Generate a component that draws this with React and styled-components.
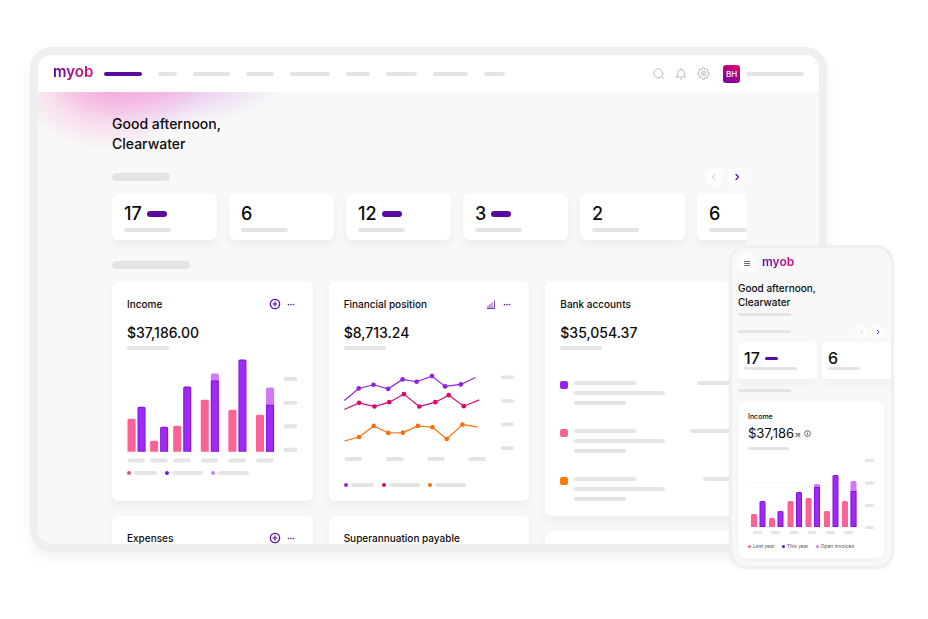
import React from "react";
import styled, { createGlobalStyle } from "styled-components";

const GlobalStyle = createGlobalStyle`
  *, *::before, *::after { box-sizing: border-box; }
  body { margin: 0; background: #fff; }
  h1, h2, h3, p, ul { margin: 0; padding: 0; font-weight: 500; }
  button { border: 0; padding: 0; background: none; font: inherit; }
`;

const Page = styled.div`
  display: flex;
  min-height: 100vh;
  padding: 47px 34px 67px 30px;
  font-family: Inter, "Liberation Sans", sans-serif;
  font-weight: 500;
  color: #0c0c0e;
`;

const Stage = styled.div`
  position: relative;
  flex: 1;
  min-width: 0;
`;

const Desktop = styled.div`
  height: calc(100vh - 114px);
  margin-right: 67px;
  overflow: hidden;
  border: 8px solid #efefef;
  border-radius: 22px;
  background: #f8f8f8;
  box-shadow: 0 6px 14px rgba(0, 0, 0, 0.05);
`;

const TopBar = styled.header`
  display: flex;
  align-items: center;
  height: 37px;
  padding: 0 15px;
  background: #fff;
`;

const Logo = styled.a`
  width: ${(p) => (p.$small ? 35 : 42)}px;
  padding-bottom: ${(p) => (p.$small ? 2 : 4)}px;
  font-family: Inter, sans-serif;
  font-size: ${(p) => (p.$small ? 12 : 15)}px;
  line-height: ${(p) => (p.$small ? 16 : 20)}px;
  font-weight: 600;
  white-space: nowrap;
  text-decoration: none;
  color: transparent;
  background: linear-gradient(100deg, #5b0a9d 5%, #a8108f 50%, #ee0a68 100%);
  background-clip: text;
  -webkit-background-clip: text;
`;

const Nav = styled.nav`
  display: flex;
  align-items: center;
  gap: 16px;
  margin-left: 9px;
`;

const NavLink = styled.a`
  display: block;
  width: ${(p) => p.$w}px;
  height: 4px;
  border-radius: 2px;
  background: ${(p) => (p.$active ? "#5a0aa0" : "#e4e4e4")};
`;

const Tools = styled.div`
  display: flex;
  align-items: center;
  gap: 10px;
  margin-left: auto;
`;

const IconButton = styled.button`
  display: flex;
  flex: none;
  align-items: center;
  justify-content: center;
  color: ${(p) => p.$color || "#5a0aa0"};
`;

const Avatar = styled.span`
  display: grid;
  place-items: center;
  width: 17px;
  height: 18px;
  margin: 0 -4px 0 3px;
  border-radius: 3px;
  background: linear-gradient(205deg, #e2066e 5%, #a0058c 50%, #7a0398 95%);
  color: #fff;
  font-size: 8px;
  line-height: 10px;
`;

const Pill = styled.span`
  display: block;
  flex: none;
  width: ${(p) => p.$w}px;
  height: ${(p) => p.$h || 4}px;
  margin-top: ${(p) => p.$mt || 0}px;
  border-radius: 4px;
  background: ${(p) => p.$color || "#e4e4e4"};
`;

const Content = styled.main`
  padding: 22px 73px 0 74px;
  background:
    radial-gradient(ellipse 92px 66px at 70px -8px, rgba(249, 160, 212, 0.85), rgba(249, 160, 212, 0.35) 55%, transparent),
    radial-gradient(ellipse 120px 42px at 124px -8px, rgba(232, 160, 218, 0.8), rgba(220, 180, 240, 0.35) 60%, transparent);
`;

const Greeting = styled.h1`
  font-size: ${(p) => (p.$small ? 10 : 14)}px;
  line-height: ${(p) => (p.$small ? 14 : 20)}px;
  margin-top: ${(p) => (p.$small ? 9 : 0)}px;
  font-weight: 500;
`;

const SectionHead = styled.div`
  display: flex;
  align-items: center;
  justify-content: space-between;
  margin-top: ${(p) => (p.$small ? 9 : 14)}px;
  padding-right: ${(p) => (p.$small ? 7 : 0)}px;
`;

const Arrows = styled.div`
  display: flex;
  gap: ${(p) => (p.$small ? 3 : 5)}px;
`;

const RoundButton = styled.button`
  display: grid;
  place-items: center;
  width: ${(p) => p.$size}px;
  height: ${(p) => p.$size}px;
  border-radius: 50%;
  background: #fdfdfd;
  color: ${(p) => (p.$muted ? "#d8d8d8" : "#5a0aa0")};
`;

const StatStrip = styled.div`
  display: flex;
  gap: ${(p) => (p.$small ? 5 : 12)}px;
  margin-top: ${(p) => (p.$small ? 5 : 0)}px;
  padding: ${(p) => (p.$small ? "0 0 10px" : "8px 0 21px")};
  overflow: hidden;
`;

const Stat = styled.div`
  flex: none;
  width: ${(p) => (p.$small ? 79 : 105)}px;
  padding: ${(p) => (p.$small ? "6px 6px 9px" : "9px 12px 8px")};
  border-radius: ${(p) => (p.$small ? 3 : 6)}px;
  background: #fff;
  box-shadow: 0 5px 8px rgba(0, 0, 0, ${(p) => (p.$small ? 0.03 : 0.05)});
`;

const StatValue = styled.div`
  display: flex;
  align-items: center;
  gap: 5px;
  font-size: ${(p) => (p.$small ? 16 : 18)}px;
  line-height: ${(p) => (p.$small ? 18 : 22)}px;
`;

const Columns = styled.div`
  display: grid;
  grid-template-columns: repeat(3, minmax(0, 1fr));
  gap: 16px;
  margin-top: 13px;
`;

const Column = styled.div`
  display: flex;
  flex-direction: column;
  gap: 15px;
`;

const Card = styled.section`
  min-height: 219px;
  padding: 14px 15px;
  border-radius: 6px;
  background: #fff;
  box-shadow: 0 5px 10px rgba(0, 0, 0, 0.05);
`;

const CardHead = styled.div`
  display: flex;
  align-items: center;
  justify-content: space-between;
  height: 16px;
`;

const CardTitle = styled.h2`
  font-size: 10px;
  line-height: 16px;
  white-space: nowrap;
`;

const CardActions = styled.div`
  display: flex;
  gap: 6px;
  padding-right: 3px;
`;

const Amount = styled.p`
  margin-top: 11px;
  font-size: 14px;
  line-height: 20px;
`;

const Chart = styled.svg`
  display: block;
  width: 100%;
  height: auto;
  margin-top: 5px;
`;

const Legend = styled.ul`
  display: flex;
  gap: ${(p) => p.$gap || 8}px;
  margin-top: ${(p) => p.$mt}px;
  list-style: none;
`;

const LegendItem = styled.li`
  display: flex;
  align-items: center;
  gap: ${(p) => (p.$small ? 2 : 3)}px;
  font-size: 5px;
  line-height: 8px;
  font-weight: 400;
  white-space: nowrap;
  color: #55555c;
`;

const Dot = styled.span`
  width: ${(p) => p.$size || 4}px;
  height: ${(p) => p.$size || 4}px;
  border-radius: 50%;
  background: ${(p) => p.$color};
`;

const Accounts = styled.ul`
  display: grid;
  gap: 24px;
  margin: 31px 0 1px;
  list-style: none;
`;

const Account = styled.li`
  display: flex;
  gap: 6px;
`;

const Swatch = styled.span`
  width: 8px;
  height: 8px;
  border-radius: 2px;
  background: ${(p) => p.$color};
`;

const AccountLines = styled.div`
  display: grid;
  flex: 1;
  gap: 6px;
`;

const Phone = styled.aside`
  position: absolute;
  right: 0;
  bottom: -17px;
  width: 165px;
  padding: 6px 0 8px 6px;
  overflow: hidden;
  border: 3px solid #efefef;
  border-radius: 18px;
  background: #f8f8f8;
  box-shadow: 0 2px 4px rgba(0, 0, 0, 0.03);
`;

const PhoneBar = styled.div`
  display: flex;
  align-items: center;
  gap: 6px;
`;

const PhoneCard = styled.section`
  margin: 10px 7px 0 0;
  padding: 10px 10px 8px;
  border-radius: 6px;
  background: #fff;
  box-shadow: 0 2px 4px rgba(0, 0, 0, 0.03);
`;

const PhoneTitle = styled.h2`
  font-size: 7px;
  line-height: 10px;
`;

const PhoneAmount = styled.p`
  display: flex;
  align-items: center;
  margin-top: 2px;
  font-size: 13px;
  line-height: 18px;
  font-weight: 400;
`;

const Cents = styled.span`
  margin: 0 4px 0 0;
  padding-top: 4px;
  font-size: 5px;
  line-height: 6px;
`;

const PINK = "#fb6394";
const PURPLE = "#9f2bf3";
const LILAC = "#d07af8";
const GREY = "#e4e4e4";

const SearchIcon = () => (
  <svg width="12" height="12" viewBox="0 0 24 24" fill="none" stroke="currentColor" strokeWidth="1.8" strokeLinecap="round">
    <circle cx="10.500" cy="10.500" r="9" />
    <path d="m17.500 17.500 4.500 4.500" />
  </svg>
);

const BellIcon = () => (
  <svg width="12" height="12" viewBox="0 0 24 24" fill="none" stroke="currentColor" strokeWidth="1.8" strokeLinecap="round" strokeLinejoin="round">
    <path d="M12 1v2M5.500 16V9.500a6.500 6.500 0 0 1 13 0V16l3 2H2.500zM11 21.500h2" />
  </svg>
);

const GearIcon = () => (
  <svg width="13" height="13" viewBox="0 0 24 24" fill="none" stroke="currentColor" strokeWidth="1.7" strokeLinejoin="round">
    <path d="M9.700 4.200 10.500 1.500h3l.8 2.700 1.600.7 2.500-1.400 2.100 2.100-1.400 2.500.7 1.600 2.700.8v3l-2.700.8-.7 1.600 1.400 2.500-2.100 2.100-2.500-1.400-1.600.7-.8 2.700h-3l-.8-2.700-1.600-.7-2.500 1.400-2.100-2.100 1.400-2.500-.7-1.600-2.700-.8v-3l2.700-.8.7-1.600-1.400-2.500 2.100-2.100 2.500 1.400z" />
    <circle cx="12" cy="12" r="4" />
    <circle cx="12" cy="12" r="1" />
  </svg>
);

const Chevron = ({ left, size = 8 }) => (
  <svg width={size} height={size} viewBox="0 0 8 8" fill="none" stroke="currentColor" strokeWidth="1.2" strokeLinecap="round" strokeLinejoin="round">
    <path d={left ? "M5 1.500 2.500 4 5 6.500" : "M3 1.500 5.500 4 3 6.500"} />
  </svg>
);

const PlusIcon = () => (
  <svg width="12" height="12" viewBox="0 0 12 12" fill="none" stroke="currentColor" strokeWidth="1.2">
    <circle cx="6" cy="6" r="4.700" />
    <path d="M6 3.500v5M3.500 6h5" />
  </svg>
);

const BarsIcon = () => (
  <svg width="12" height="12" viewBox="0 0 12 12" fill="none" stroke="currentColor" strokeWidth="1">
    <path d="M2 10.500h8M3 7.500v3M5 6v4.500M7 4.500v6M9.500 2.500v8" opacity="0.75" />
  </svg>
);

const DotsIcon = () => (
  <svg width="8" height="12" viewBox="0 0 8 12" fill="currentColor">
    <circle cx="1.500" cy="6.500" r="0.800" />
    <circle cx="4" cy="6.500" r="0.800" />
    <circle cx="6.500" cy="6.500" r="0.800" />
  </svg>
);

const MenuIcon = () => (
  <svg width="8" height="8" viewBox="0 0 8 8" stroke="#6c6c72" strokeWidth="1">
    <path d="M1 2.500h6M1 4.500h6M1 6.500h6" />
  </svg>
);

const InfoIcon = () => (
  <svg width="7" height="7" viewBox="0 0 7 7" fill="none" stroke="#333338" strokeWidth="0.700">
    <circle cx="3.500" cy="3.500" r="2.900" />
    <path d="M3.500 3.100v2M3.500 1.700v.7" />
  </svg>
);

const incomeBars = [
  { x: 0.5, last: 33, now: 45 },
  { x: 23, last: 11, now: 25 },
  { x: 46, last: 26, now: 65 },
  { x: 73.5, last: 52, now: 71, open: 7 },
  { x: 101, last: 42, now: 92 },
  { x: 128.5, last: 37, now: 47, open: 17 },
];

const phoneBars = [
  { x: 3, last: 13, now: 26 },
  { x: 21, last: 9, now: 16 },
  { x: 39.5, last: 26, now: 35 },
  { x: 57.5, last: 29, now: 40, open: 3 },
  { x: 76, last: 16, now: 52 },
  { x: 94, last: 26, now: 36, open: 10 },
];

const topRounded = (x, y, w, h, r) =>
  `M${x} ${y + h}V${y + r}q0 ${-r} ${r} ${-r}h${w - 2 * r}q${r} 0 ${r} ${r}V${y + h}z`;

function Bars({ data, base, width, step }) {
  return data.map((b) => {
    const open = b.open || 0;
    const nx = b.x + step;
    return (
      <g key={b.x}>
        <path d={topRounded(b.x, base - b.last, width, b.last, 1.5)} fill={PINK} />
        {open > 0 && <path d={topRounded(nx, base - b.now - open, width, open + b.now, 1.5)} fill={LILAC} />}
        <path d={topRounded(nx, base - b.now, width, b.now, open ? 0.5 : 1.5)} fill="#8413da" />
        <rect x={nx + 1} y={base - b.now + 1} width={width - 2} height={b.now - 2} fill={PURPLE} />
      </g>
    );
  });
}

function IncomeChart() {
  return (
    <Chart viewBox="0 0 170 110" role="img" aria-label="Income by month">
      <Bars data={incomeBars} base={96.5} width={8} step={10} />
      {incomeBars.map((b) => (
        <rect key={b.x} x={b.x} y="103" width="17.500" height="4" rx="2" fill={GREY} />
      ))}
      {[22, 45.5, 69, 92.5].map((y) => (
        <rect key={y} x="156" y={y} width="13.500" height="4" rx="1.500" fill={GREY} />
      ))}
    </Chart>
  );
}

const series = [
  { color: "#9120e4", points: [[67, 376], [110, 340], [154, 329], [198, 341], [241, 313], [283, 320], [329, 303], [368, 334], [415, 328], [459, 307]] },
  { color: "#dc0a6e", points: [[67, 403], [111, 383], [157, 394], [201, 381], [245, 357], [291, 394], [339, 381], [379, 360], [424, 393], [470, 374]] },
  { color: "#f56f10", points: [[67, 497], [111, 485], [155, 452], [198, 473], [242, 472], [287, 452], [330, 456], [373, 491], [420, 448], [465, 455]] },
];

function PositionChart() {
  return (
    <Chart viewBox="66 240 510 330" role="img" aria-label="Financial position over time">
      {series.map((s) => (
        <g key={s.color}>
          <polyline points={s.points.join(" ")} fill="none" stroke={s.color} strokeWidth="3.500" />
          {s.points.slice(1, -1).map(([x, y]) => (
            <circle key={x} cx={x} cy={y} r="7" fill={s.color} />
          ))}
        </g>
      ))}
      {[68, 192, 315, 438].map((x) => (
        <rect key={x} x={x} y="545" width="52" height="12" rx="5" fill={GREY} />
      ))}
      {[307, 378, 448, 519].map((y) => (
        <rect key={y} x="534" y={y - 6} width="40" height="11" rx="5" fill={GREY} />
      ))}
    </Chart>
  );
}

function PhoneChart() {
  return (
    <Chart viewBox="0 0 126 82" role="img" aria-label="Income by month">
      <path d="M2 27.500h106" stroke="#f6f6f6" />
      <Bars data={phoneBars} base={72} width={6} step={8.5} />
      {phoneBars.map((b) => (
        <rect key={b.x} x={b.x + 2} y="76" width="9" height="3" rx="1.500" fill={GREY} />
      ))}
      {[4, 26.5, 49, 71].map((y) => (
        <rect key={y} x="117" y={y} width="9" height="3" rx="1.500" fill={GREY} />
      ))}
    </Chart>
  );
}

function WidgetCard({ title, amount, icon, children }) {
  return (
    <Card>
      <CardHead>
        <CardTitle>{title}</CardTitle>
        {icon && (
          <CardActions>
            <IconButton aria-label={`${title} action`}>{icon}</IconButton>
            <IconButton aria-label={`${title} menu`}><DotsIcon /></IconButton>
          </CardActions>
        )}
      </CardHead>
      {amount && (
        <>
          <Amount>{amount}</Amount>
          <Pill $w={42} $mt={3} />
        </>
      )}
      {children}
    </Card>
  );
}

function PillLegend({ colors, mt }) {
  return (
    <Legend $mt={mt}>
      {colors.map((c, i) => (
        <LegendItem key={c}>
          <Dot $color={c} />
          <Pill $w={i ? 31 : 23} />
        </LegendItem>
      ))}
    </Legend>
  );
}

const stats = [["17", true], ["6"], ["12", true], ["3", true], ["2"], ["6"]];
const navItems = [38, 19, 37, 28, 40, 24, 31, 35, 21];
const accounts = [["#9a20ee", 34], [PINK, 41], ["#ff7a0a", 28]];

export default function App() {
  return (
    <>
      <GlobalStyle />
      <Page>
        <Stage>
          <Desktop>
            <TopBar>
              <Logo href="#home">myob</Logo>
              <Nav aria-label="Main">
                {navItems.map((w, i) => (
                  <NavLink key={i} href={`#section-${i}`} aria-label={`Section ${i + 1}`} $w={w} $active={i === 0} />
                ))}
              </Nav>
              <Tools>
                <IconButton $color="#b4b4b8" aria-label="Search"><SearchIcon /></IconButton>
                <IconButton $color="#b4b4b8" aria-label="Notifications"><BellIcon /></IconButton>
                <IconButton $color="#b4b4b8" aria-label="Settings"><GearIcon /></IconButton>
                <Avatar>BH</Avatar>
                <Pill $w={58} />
              </Tools>
            </TopBar>
            <Content>
              <Greeting>Good afternoon,<br />Clearwater</Greeting>
              <SectionHead>
                <Pill $w={58} $h={8} />
                <Arrows>
                  <RoundButton $size={18} $muted aria-label="Previous"><Chevron left /></RoundButton>
                  <RoundButton $size={18} aria-label="Next"><Chevron /></RoundButton>
                </Arrows>
              </SectionHead>
              <StatStrip>
                {stats.map(([n, flag], i) => (
                  <Stat key={i}>
                    <StatValue>{n}{flag && <Pill $w={20} $h={6} $color="#5a0aa0" />}</StatValue>
                    <Pill $w={47} $mt={3} />
                  </Stat>
                ))}
              </StatStrip>
              <Pill $w={78} $h={8} />
              <Columns>
                <Column>
                  <WidgetCard title="Income" amount="$37,186.00" icon={<PlusIcon />}>
                    <IncomeChart />
                    <PillLegend mt={6} colors={["#e8517f", "#8413da", LILAC]} />
                  </WidgetCard>
                  <WidgetCard title="Expenses" icon={<PlusIcon />} />
                </Column>
                <Column>
                  <WidgetCard title="Financial position" amount="$8,713.24" icon={<BarsIcon />}>
                    <PositionChart />
                    <PillLegend mt={18} colors={series.map((s) => s.color)} />
                  </WidgetCard>
                  <WidgetCard title="Superannuation payable" />
                </Column>
                <Column>
                  <WidgetCard title="Bank accounts" amount="$35,054.37">
                    <Accounts>
                      {accounts.map(([color, w]) => (
                        <Account key={color}>
                          <Swatch $color={color} />
                          <AccountLines>
                            <Pill $w={62} />
                            <Pill $w={91} />
                            <Pill $w={52} />
                          </AccountLines>
                          <Pill $w={w} />
                        </Account>
                      ))}
                    </Accounts>
                  </WidgetCard>
                  <WidgetCard />
                </Column>
              </Columns>
            </Content>
          </Desktop>

          <Phone>
            <PhoneBar>
              <RoundButton $size={18} aria-label="Menu"><MenuIcon /></RoundButton>
              <Logo href="#home" $small>myob</Logo>
            </PhoneBar>
            <Greeting as="h2" $small>Good afternoon,<br />Clearwater</Greeting>
            <Pill $w={53} $h={3} $mt={4} />
            <SectionHead $small>
              <Pill $w={53} $h={3} />
              <Arrows $small>
                <RoundButton $size={13} $muted aria-label="Previous"><Chevron left size={6} /></RoundButton>
                <RoundButton $size={13} aria-label="Next"><Chevron size={6} /></RoundButton>
              </Arrows>
            </SectionHead>
            <StatStrip $small>
              <Stat $small>
                <StatValue $small>17<Pill $w={13} $h={3} $color="#5a0aa0" /></StatValue>
                <Pill $w={53} $h={3} />
              </Stat>
              <Stat $small>
                <StatValue $small>6</StatValue>
                <Pill $w={32} $h={3} />
              </Stat>
            </StatStrip>
            <Pill $w={53} $h={3} />
            <PhoneCard>
              <PhoneTitle>Income</PhoneTitle>
              <PhoneAmount>$37,186<Cents>.16</Cents><InfoIcon /></PhoneAmount>
              <Pill $w={41} $h={3} $mt={5} />
              <PhoneChart />
              <Legend $mt={5} $gap={7}>
                <LegendItem $small><Dot $size={3} $color={PINK} />Last year</LegendItem>
                <LegendItem $small><Dot $size={3} $color="#6d0fb8" />This year</LegendItem>
                <LegendItem $small><Dot $size={3} $color={LILAC} />Open invoices</LegendItem>
              </Legend>
            </PhoneCard>
          </Phone>
        </Stage>
      </Page>
    </>
  );
}
